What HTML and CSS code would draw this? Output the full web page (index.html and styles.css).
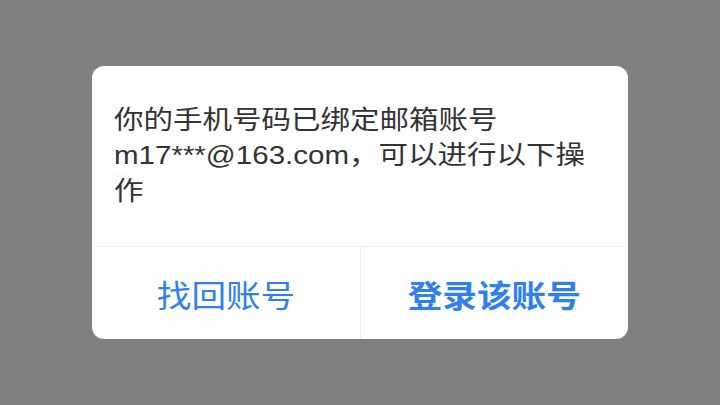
FILE: index.html
```html
<!DOCTYPE html>
<html lang="zh-CN">
<head>
<meta charset="utf-8">
<title>提示</title>
<link rel="stylesheet" href="styles.css">
</head>
<body>
<div class="overlay">
  <div class="dialog">
    <div class="message">
      <p class="message-text">你的手机号码已绑定邮箱账号m17***@163.com，可以进行以下操作</p>
    </div>
    <div class="actions">
      <div class="action"><span class="action-label">找回账号</span></div>
      <div class="action action-primary"><span class="action-label">登录该账号</span></div>
    </div>
  </div>
</div>
</body>
</html>
```
FILE: styles.css
```css
html, body {
  margin: 0;
  padding: 0;
}
body {
  width: 720px;
  height: 405px;
  background: #808080;
  font-family: "Liberation Sans", "Noto Sans CJK SC", sans-serif;
  overflow: hidden;
}
.overlay {
  width: 720px;
  height: 405px;
  display: flex;
  align-items: center;
  justify-content: center;
}
.dialog {
  width: 536px;
  height: 273px;
  background: #ffffff;
  border-radius: 12px;
  display: flex;
  flex-direction: column;
  overflow: hidden;
}
.message {
  height: 180px;
  display: flex;
  align-items: center;
  padding-left: 22px;
}
.message-text {
  margin: 0;
  width: 428px;
  font-size: 26px;
  line-height: 35.5px;
  color: #333333;
  transform: scaleX(1.135);
  transform-origin: left center;
}
.actions {
  flex: 1;
  display: flex;
  border-top: 1px solid #efefef;
}
.action {
  flex: 1;
  display: flex;
  align-items: center;
  justify-content: center;
  color: #2f80ee;
  font-size: 30.5px;
  font-family: "Noto Sans CJK SC", sans-serif;
}
.action-primary {
  border-left: 1px solid #efefef;
  font-weight: 700;
}
.action-label {
  display: inline-block;
  transform: scaleX(1.135);
  padding-top: 1px;
}
```
